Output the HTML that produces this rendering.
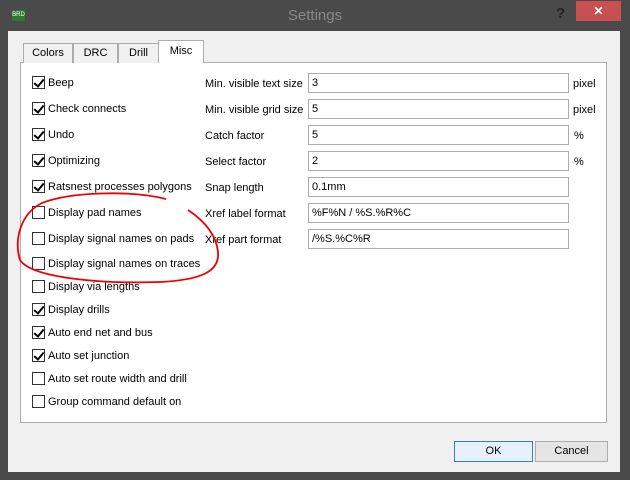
<!DOCTYPE html>
<html><head><style>
*{margin:0;padding:0;box-sizing:border-box}
body{width:630px;height:480px;background:#4a4a4a;font-family:"Liberation Sans",sans-serif;font-size:11px;color:#000;position:relative;overflow:hidden}
.abs{position:absolute}
.client{left:8px;top:31px;width:612px;height:441px;background:#f0f0f0}
.pane{left:20px;top:62px;width:587px;height:361px;background:#fff;border:1px solid #adadad}
.tab{top:43px;height:20px;border:1px solid #adadad;border-bottom:none;background:#f0f0f0;text-align:center;line-height:19px}
.cb{width:13px;height:13px;border:1px solid #333;background:#fff;left:32px}
.cb.c::after{content:"";position:absolute;left:3px;top:0px;width:4px;height:8px;border:solid #000;border-width:0 2px 2px 0;transform:rotate(40deg)}
.lbl{left:48px}
.rl{left:205px}
.in{left:308px;width:261px;height:20px;border:1px solid #adadad;background:#fff;padding-left:3px;line-height:18px}
.btn{top:441px;height:21px;border:1px solid #adadad;background:#e5e5e5;text-align:center;line-height:19px}
</style></head><body>
<div class="abs" style="left:12px;top:10px;width:13px;height:11px;background:#2d7a2d;color:#fff;font-size:6px;line-height:11px;text-align:center;border-radius:1px">BRD</div>
<div class="abs" style="left:0;width:630px;top:7px;text-align:center;font-size:15px;color:#888">Settings</div>
<div class="abs" style="left:556px;top:5px;font-size:15px;font-weight:bold;color:#222">?</div>
<div class="abs" style="left:576px;top:1px;width:45px;height:20px;background:#c75050;color:#fff;text-align:center;font-size:12px;line-height:20px;font-weight:bold">✕</div>
<div class="abs client"></div>
<div class="abs pane"></div>
<div class="abs tab" style="left:23px;width:50px">Colors</div>
<div class="abs tab" style="left:73px;width:45px">DRC</div>
<div class="abs tab" style="left:118px;width:41px">Drill</div>
<div class="abs tab" style="left:158px;width:46px;top:40px;height:23px;background:#fff;line-height:20px">Misc</div>

<div class="abs cb c" style="top:76px"></div><div class="abs lbl" style="top:77px">Beep</div>
<div class="abs cb c" style="top:102px"></div><div class="abs lbl" style="top:103px">Check connects</div>
<div class="abs cb c" style="top:128px"></div><div class="abs lbl" style="top:129px">Undo</div>
<div class="abs cb c" style="top:154px"></div><div class="abs lbl" style="top:155px">Optimizing</div>
<div class="abs cb c" style="top:180px"></div><div class="abs lbl" style="top:181px">Ratsnest processes polygons</div>
<div class="abs cb" style="top:206px"></div><div class="abs lbl" style="top:207px">Display pad names</div>
<div class="abs cb" style="top:232px"></div><div class="abs lbl" style="top:233px">Display signal names on pads</div>
<div class="abs cb" style="top:257px"></div><div class="abs lbl" style="top:258px">Display signal names on traces</div>
<div class="abs cb" style="top:280px"></div><div class="abs lbl" style="top:281px">Display via lengths</div>
<div class="abs cb c" style="top:303px"></div><div class="abs lbl" style="top:304px">Display drills</div>
<div class="abs cb c" style="top:326px"></div><div class="abs lbl" style="top:327px">Auto end net and bus</div>
<div class="abs cb c" style="top:349px"></div><div class="abs lbl" style="top:350px">Auto set junction</div>
<div class="abs cb" style="top:372px"></div><div class="abs lbl" style="top:373px">Auto set route width and drill</div>
<div class="abs cb" style="top:395px"></div><div class="abs lbl" style="top:396px">Group command default on</div>

<div class="abs rl" style="top:78px">Min. visible text size</div><div class="abs in" style="top:73px">3</div><div class="abs" style="left:573px;top:78px">pixel</div>
<div class="abs rl" style="top:104px">Min. visible grid size</div><div class="abs in" style="top:99px">5</div><div class="abs" style="left:573px;top:104px">pixel</div>
<div class="abs rl" style="top:130px">Catch factor</div><div class="abs in" style="top:125px">5</div><div class="abs" style="left:574px;top:130px">%</div>
<div class="abs rl" style="top:156px">Select factor</div><div class="abs in" style="top:151px">2</div><div class="abs" style="left:574px;top:156px">%</div>
<div class="abs rl" style="top:182px">Snap length</div><div class="abs in" style="top:177px">0.1mm</div>
<div class="abs rl" style="top:208px">Xref label format</div><div class="abs in" style="top:203px">%F%N / %S.%R%C</div>
<div class="abs rl" style="top:234px">Xref part format</div><div class="abs in" style="top:229px">/%S.%C%R</div>

<div class="abs btn" style="left:454px;width:79px;border-color:#3c7fb1;background:#e5f1fb">OK</div>
<div class="abs btn" style="left:535px;width:73px">Cancel</div>

<svg class="abs" style="left:0;top:0" width="630" height="480"><path d="M166 199 C130 190 70 192 42 203 C20 214 14 240 20 260 C32 278 100 284 160 282 C200 280 220 272 218 252 C216 232 200 218 188 210" fill="none" stroke="#e00" stroke-width="1.8"/></svg>
</body></html>
